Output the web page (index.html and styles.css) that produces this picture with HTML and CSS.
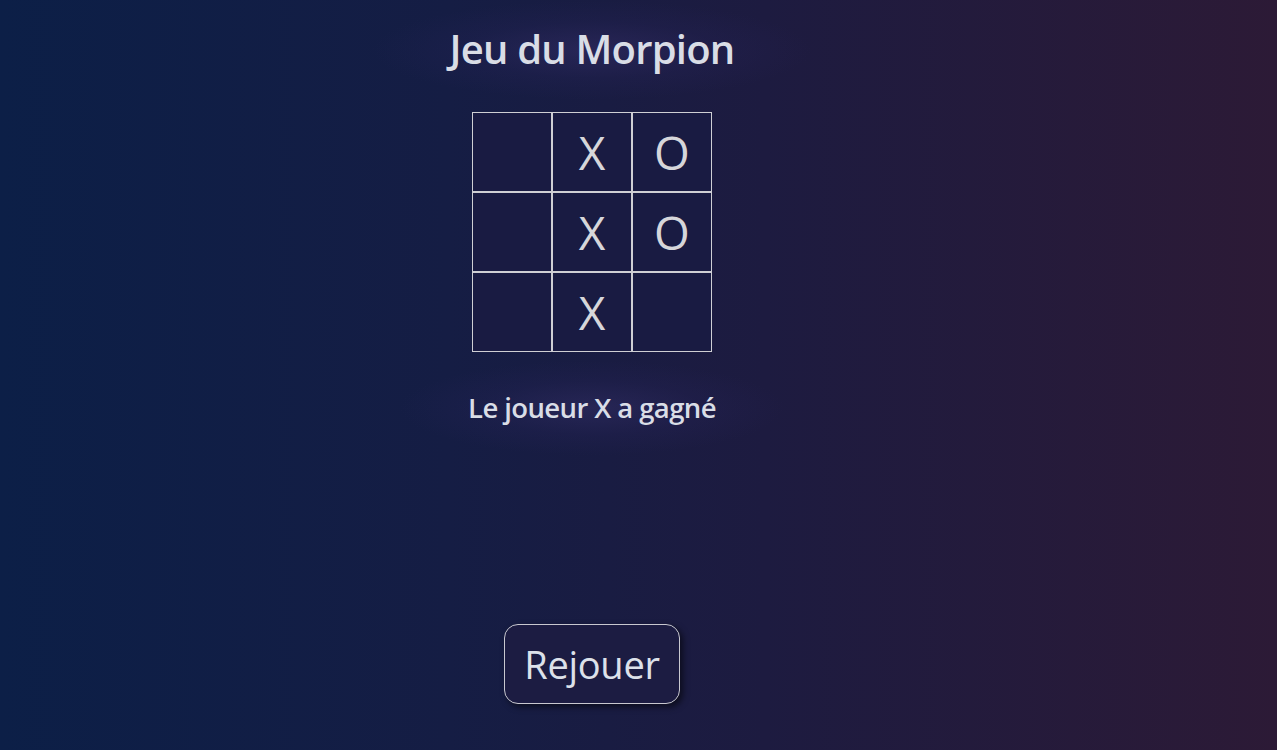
FILE: index.html
```html
<!DOCTYPE html>
<html lang="fr">
<head>
<meta charset="utf-8">
<title>Jeu du Morpion</title>
<link rel="stylesheet" href="styles.css">
</head>
<body>
  <main class="game">
    <h1 class="title">Jeu du Morpion</h1>
    <div class="board">
      <div class="cell"></div>
      <div class="cell">X</div>
      <div class="cell">O</div>
      <div class="cell"></div>
      <div class="cell">X</div>
      <div class="cell">O</div>
      <div class="cell"></div>
      <div class="cell">X</div>
      <div class="cell"></div>
    </div>
    <p class="status">Le joueur X a gagné</p>
    <button class="replay" type="button">Rejouer</button>
  </main>
</body>
</html>
```

FILE: styles.css
```css
html, body {
  margin: 0;
  height: 100%;
}

body {
  background: linear-gradient(90deg, #0c1f47 0%, #151d44 35%, #1d1b40 60%, #2c1a36 100%);
  color: #d9dde6;
  font-family: "Open Sans", "Noto Sans", sans-serif;
  overflow: hidden;
}

.game {
  width: 1184px;
  display: flex;
  flex-direction: column;
  align-items: center;
}

.title {
  margin: 0;
  padding: 24px 80px 26px;
  font-size: 40px;
  font-weight: 600;
  letter-spacing: -0.8px;
  line-height: 50px;
  background: radial-gradient(ellipse at center, rgba(50, 44, 100, 0.6) 0%, rgba(40, 36, 90, 0.25) 40%, rgba(40, 36, 90, 0) 70%);
}

.board {
  margin-top: 12px;
  display: grid;
  grid-template-columns: repeat(3, 80px);
  grid-template-rows: repeat(3, 80px);
}

.cell {
  box-sizing: border-box;
  border: 1px solid #cfcfd4;
  background: #191b42;
  color: #d6d6da;
  font-size: 46px;
  display: flex;
  align-items: center;
  justify-content: center;
  line-height: 1;
}

.status {
  margin: 8px 0 0;
  padding: 30px 70px 30px;
  font-size: 27.5px;
  font-weight: 600;
  letter-spacing: -0.6px;
  line-height: 36px;
  background: radial-gradient(ellipse at center, rgba(48, 44, 98, 0.6) 0%, rgba(40, 36, 90, 0.25) 40%, rgba(40, 36, 90, 0) 70%);
}

.replay {
  margin-top: 168px;
  width: 176px;
  height: 80px;
  box-sizing: border-box;
  border: 1px solid #c8c8d0;
  border-radius: 14px;
  background: #1c1c42;
  color: #dde1ea;
  font-family: "Open Sans", "Noto Sans", sans-serif;
  font-size: 38px;
  letter-spacing: -0.3px;
  box-shadow: 3px 3px 6px rgba(0, 0, 0, 0.55);
  cursor: pointer;
}
```
